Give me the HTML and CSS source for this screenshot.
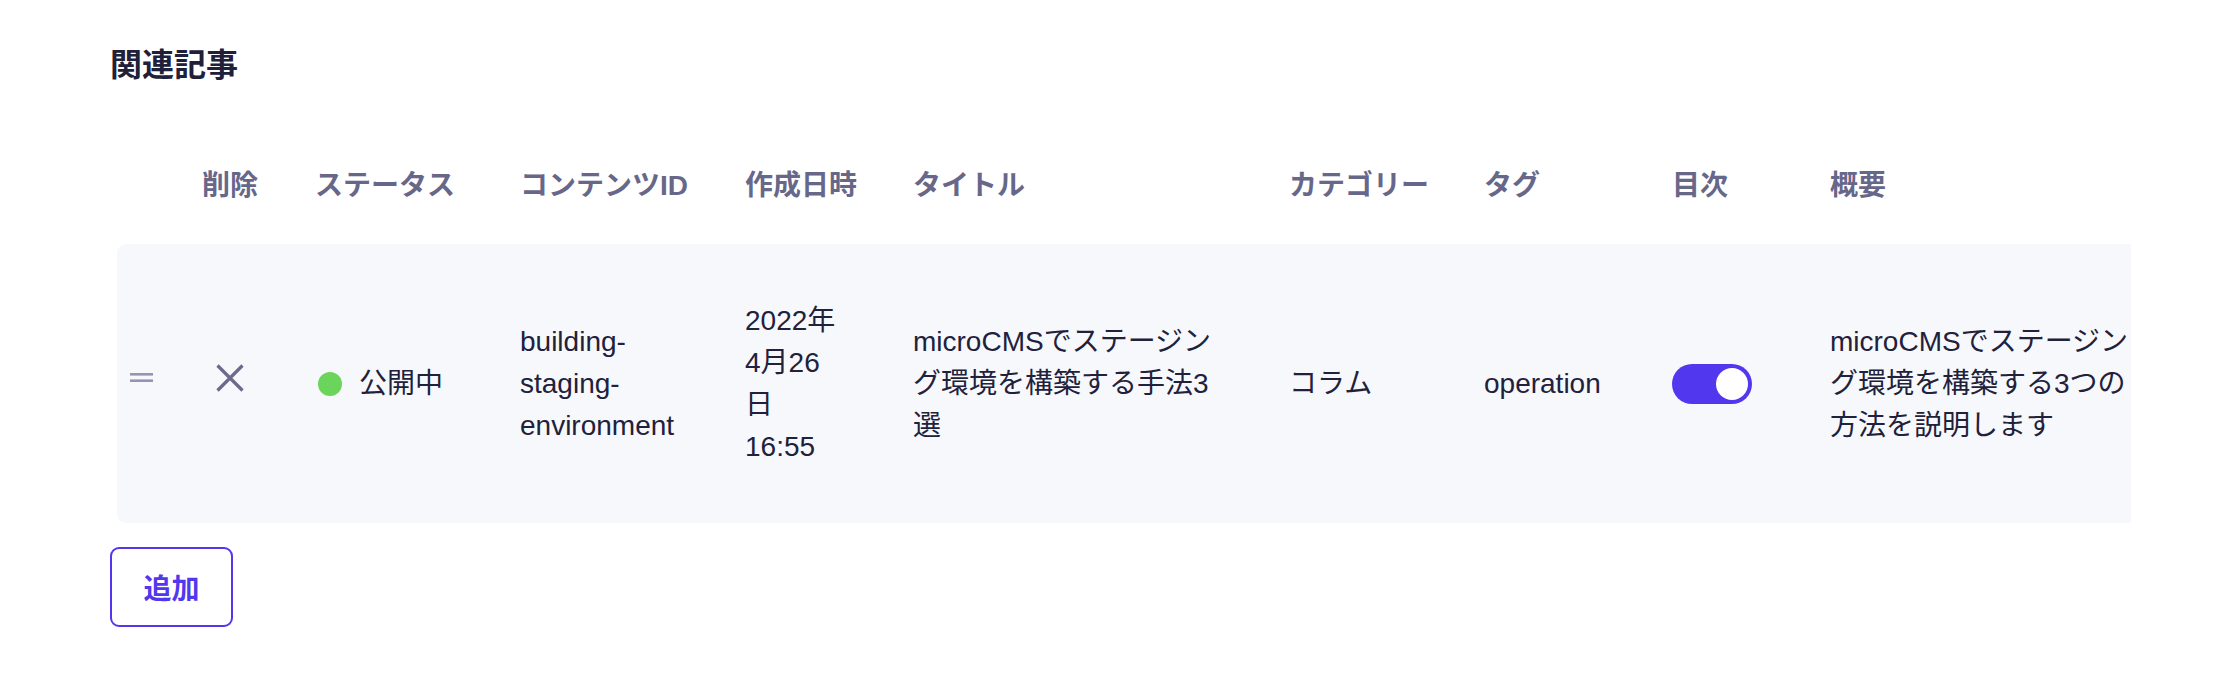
FILE: index.html
```html
<!DOCTYPE html>
<html lang="ja">
<head>
  <meta charset="UTF-8">
  <title>関連記事</title>
  <meta name="viewport" content="width=device-width, initial-scale=1.0">
  <link rel="stylesheet" href="styles.css">
</head>
<body>

  <div class="field">
    <h2 class="field-title">関連記事</h2>

    <div class="table">
      <div class="thead">
        <div class="cell"></div>
        <div class="cell center">削除</div>
        <div class="cell">ステータス</div>
        <div class="cell">コンテンツID</div>
        <div class="cell">作成日時</div>
        <div class="cell">タイトル</div>
        <div class="cell">カテゴリー</div>
        <div class="cell">タグ</div>
        <div class="cell">目次</div>
        <div class="cell">概要</div>
      </div>

      <div class="row">
        <div class="cell drag">
          <svg class="handle" width="23" height="10" viewBox="0 0 23 10">
            <rect x="0" y="0" width="23" height="2.6" fill="#9595b1"/>
            <rect x="0" y="6.4" width="23" height="2.6" fill="#9595b1"/>
          </svg>
        </div>
        <div class="cell center">
          <svg class="remove" width="28" height="28" viewBox="0 0 28 28">
            <path d="M1.5 1.5 L26.5 26.5 M26.5 1.5 L1.5 26.5" stroke="#6a6a8b" stroke-width="3.2" fill="none"/>
          </svg>
        </div>
        <div class="cell">
          <span class="status"><span class="dot"></span>公開中</span>
        </div>
        <div class="cell">building-staging-environment</div>
        <div class="cell date">2022年4月26日 16:55</div>
        <div class="cell">microCMSでステージング環境を構築する手法3選</div>
        <div class="cell">コラム</div>
        <div class="cell">operation</div>
        <div class="cell">
          <span class="toggle"><span class="knob"></span></span>
        </div>
        <div class="cell">microCMSでステージング環境を構築する3つの方法を説明します</div>
      </div>
    </div>

    <button class="add-btn">追加</button>
  </div>

</body>
</html>
```

FILE: styles.css
```css
:root {
  --text: #21213b;
  --muted: #67678a;
  --row-bg: #f7f8fc;
  --primary: #5138ee;
  --green: #6ad55a;
}

body {
  margin: 0;
  background: #fff;
  color: var(--text);
  font-family: "Liberation Sans", "Noto Sans CJK JP", sans-serif;
  font-size: 28px;
  line-height: 42px;
}

.field {
  padding: 41px 0 0 110px;
}

.field-title {
  margin: 0;
  font-size: 32px;
  line-height: 48px;
  font-weight: bold;
  color: #20203a;
}

.table {
  margin: 76px 0 0 7px;
  width: 2014px;
  overflow: hidden;
}

.thead,
.row {
  display: grid;
  grid-template-columns: 60px 106px 205px 225px 168px 376px 195px 188px 158px 376px;
  width: max-content;
}

.thead {
  font-weight: bold;
  color: var(--muted);
  white-space: nowrap;
  margin-bottom: 37px;
}

.row {
  background: var(--row-bg);
  border-radius: 9px;
  min-height: 279px;
  align-items: center;
}

.cell {
  padding: 0 32px;
}

.cell.center {
  padding: 0;
  display: flex;
  justify-content: center;
}

.cell.drag {
  padding: 0 0 0 13px;
}

.row .cell.date {
  padding-right: 40px;
}

.handle,
.remove {
  display: block;
  margin-bottom: 12px;
}

.status {
  display: flex;
  align-items: center;
}

.dot {
  width: 24px;
  height: 24px;
  border-radius: 50%;
  background: var(--green);
  margin: 0 17px 0 3px;
}

.toggle {
  display: flex;
  justify-content: flex-end;
  align-items: center;
  width: 80px;
  height: 40px;
  padding: 4px;
  box-sizing: border-box;
  border-radius: 20px;
  background: var(--primary);
}

.knob {
  width: 32px;
  height: 32px;
  border-radius: 50%;
  background: #fff;
}

.add-btn {
  display: block;
  margin-top: 24px;
  width: 123px;
  height: 80px;
  padding: 0;
  background: #fff;
  border: 2px solid var(--primary);
  border-radius: 9px;
  color: var(--primary);
  font-family: inherit;
  font-size: 28px;
  font-weight: bold;
}
```
